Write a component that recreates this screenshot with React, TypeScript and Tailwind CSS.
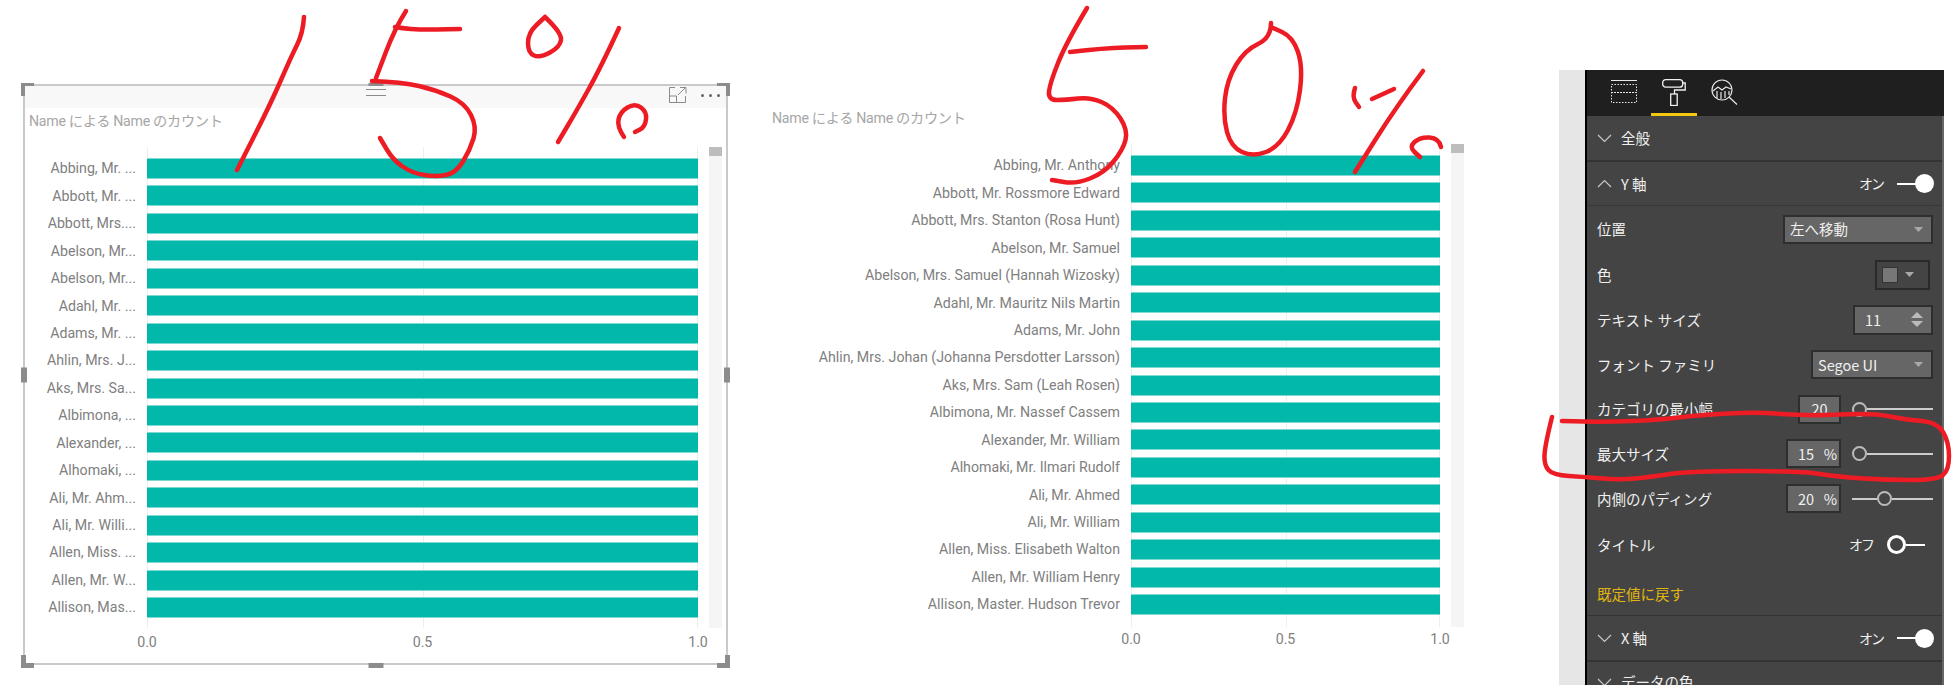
import type { ReactNode } from 'react';

const FULL_NAMES = [
  'Abbing, Mr. Anthony',
  'Abbott, Mr. Rossmore Edward',
  'Abbott, Mrs. Stanton (Rosa Hunt)',
  'Abelson, Mr. Samuel',
  'Abelson, Mrs. Samuel (Hannah Wizosky)',
  'Adahl, Mr. Mauritz Nils Martin',
  'Adams, Mr. John',
  'Ahlin, Mrs. Johan (Johanna Persdotter Larsson)',
  'Aks, Mrs. Sam (Leah Rosen)',
  'Albimona, Mr. Nassef Cassem',
  'Alexander, Mr. William',
  'Alhomaki, Mr. Ilmari Rudolf',
  'Ali, Mr. Ahmed',
  'Ali, Mr. William',
  'Allen, Miss. Elisabeth Walton',
  'Allen, Mr. William Henry',
  'Allison, Master. Hudson Trevor',
];

const SHORT_NAMES = [
  'Abbing, Mr. ...',
  'Abbott, Mr. ...',
  'Abbott, Mrs....',
  'Abelson, Mr...',
  'Abelson, Mr...',
  'Adahl, Mr. ...',
  'Adams, Mr. ...',
  'Ahlin, Mrs. J...',
  'Aks, Mrs. Sa...',
  'Albimona, ...',
  'Alexander, ...',
  'Alhomaki, ...',
  'Ali, Mr. Ahm...',
  'Ali, Mr. Willi...',
  'Allen, Miss. ...',
  'Allen, Mr. W...',
  'Allison, Mas...',
];

type Point = [number, number];

// smooth line through hand-traced points
function ink(points: Point[]) {
  let d = `M${points[0][0]} ${points[0][1]}`;
  for (let i = 1; i < points.length - 1; i++) {
    const [x, y] = points[i];
    const [nx, ny] = points[i + 1];
    d += ` Q${x} ${y} ${(x + nx) / 2} ${(y + ny) / 2}`;
  }
  const last = points[points.length - 1];
  return `${d} L${last[0]} ${last[1]}`;
}

const STROKES: Point[][] = [
  // 15%
  [[304, 17], [303, 33], [291, 57], [271, 103], [237, 170]],
  [[406, 11], [395, 28], [376, 78]],
  [[395, 27], [412, 30], [460, 29]],
  [[372, 81], [402, 82], [436, 90], [465, 103], [477, 127], [470, 150], [456, 173], [436, 177], [412, 173], [393, 160], [380, 138]],
  [[545, 17], [562, 33], [560, 47], [540, 58], [528, 53], [528, 33], [545, 17]],
  [[619, 28], [601, 67], [577, 110], [558, 142]],
  [[624, 137], [617, 127], [620, 112], [635, 103], [647, 112], [645, 127], [635, 132]],
  // 50%
  [[1087, 8], [1066, 43], [1050, 83], [1048, 100], [1066, 100], [1090, 97], [1113, 107], [1128, 130], [1123, 150], [1104, 173], [1076, 184], [1052, 180]],
  [[1070, 52], [1104, 48], [1146, 47]],
  [[1271, 23], [1271, 38], [1245, 50], [1227, 80], [1223, 117], [1231, 147], [1253, 157], [1279, 147], [1297, 113], [1303, 67], [1293, 37], [1271, 27]],
  [[1355, 88], [1352, 97], [1359, 107]],
  [[1372, 99], [1394, 89]],
  [[1423, 71], [1396, 107], [1355, 172]],
  [[1441, 147], [1439, 138], [1420, 137], [1409, 147], [1420, 157]],
  // circled setting
  [[1552, 417], [1545, 445], [1544, 465], [1553, 475], [1585, 477], [1620, 480], [1650, 477], [1690, 471], [1800, 471], [1840, 477], [1887, 480], [1937, 480], [1949, 470], [1949, 442], [1937, 422], [1907, 420], [1873, 413], [1807, 416], [1757, 412], [1700, 415], [1657, 420], [1607, 422], [1562, 421]],
];

function ChartBody({
  names,
  labelWidth,
  plotWidth,
  titleClass,
  axisClass,
  plotHeight,
}: {
  names: string[];
  labelWidth: string;
  plotWidth: string;
  titleClass: string;
  axisClass: string;
  plotHeight: string;
}) {
  return (
    <div>
      <p className={`h-[20px] whitespace-nowrap text-[14.2px] leading-[20px] tracking-[-0.3px] text-[#a6a6a6] ${titleClass}`}>
        Name による Name のカウント
      </p>
      <div className={`mt-[16px] flex ${plotHeight}`}>
        <div className={`flex shrink-0 flex-col pt-[7.8px] ${labelWidth}`}>
          {names.map((name, i) => (
            <div
              key={i}
              className="flex h-[27.44px] items-center justify-end whitespace-nowrap pt-px text-[14.2px] text-[#808080]"
            >
              {name}
            </div>
          ))}
        </div>
        <div className={`relative ml-[11px] flex shrink-0 flex-col pt-[7.8px] ${plotWidth}`}>
          <div className="absolute inset-y-0 left-0 w-px bg-[#eeeeee]" />
          <div className="absolute inset-y-0 left-1/2 w-px bg-[#eeeeee]" />
          <div className="absolute inset-y-0 right-0 w-px bg-[#eeeeee]" />
          {names.map((_, i) => (
            <div key={i} className="relative flex h-[27.44px] items-center">
              <div className="h-[21px] w-full border-y border-[#7fd9d1] bg-[#01b8aa]" />
            </div>
          ))}
        </div>
        <div className="ml-[11px] w-[13px] shrink-0 bg-[#f5f5f5]">
          <div className="h-[9px] bg-[#bdbdbd]" />
        </div>
      </div>
      <div className={`flex ${axisClass}`}>
        <div className={`shrink-0 ${labelWidth}`} />
        <div className={`ml-[11px] flex shrink-0 justify-between text-[14.2px] leading-[20px] text-[#808080] ${plotWidth}`}>
          <span className="flex w-0 justify-center">0.0</span>
          <span className="flex w-0 justify-center">0.5</span>
          <span className="flex w-0 justify-center">1.0</span>
        </div>
      </div>
    </div>
  );
}

function Caret() {
  return (
    <svg width="9" height="5" viewBox="0 0 9 5" className="shrink-0">
      <path d="M0 0h9L4.5 5z" fill="#a8a8a8" />
    </svg>
  );
}

function Chevron({ up }: { up?: boolean }) {
  return (
    <svg width="15" height="9" viewBox="0 0 15 9" fill="none" stroke="#c8c8c8" strokeWidth="1.2" className="shrink-0">
      <path d={up ? 'M1 8l6.5-6.5L14 8' : 'M1 1l6.5 6.5L14 1'} />
    </svg>
  );
}

function ToggleOn() {
  return (
    <div className="flex items-center">
      <div className="h-[2px] w-[19px] bg-white" />
      <div className="-ml-px size-[19px] rounded-full bg-white" />
    </div>
  );
}

function ToggleOff() {
  return (
    <div className="mr-[8px] flex items-center">
      <div className="size-[19px] rounded-full border-[3px] border-white" />
      <div className="h-[2px] w-[19px] bg-white" />
    </div>
  );
}

function SectionRow({
  title,
  up,
  className,
  right,
}: {
  title: string;
  up?: boolean;
  className: string;
  right?: ReactNode;
}) {
  return (
    <div className={`flex items-center pl-[10px] pr-[8px] ${className}`}>
      <Chevron up={up} />
      <span className="ml-[9px] text-[14.5px] text-[#f0f0f0]">{title}</span>
      {right}
    </div>
  );
}

function OnSwitch() {
  return (
    <div className="ml-auto flex items-center gap-[14px]">
      <span className="text-[14px] tracking-[-2px] text-[#f0f0f0]">オン</span>
      <ToggleOn />
    </div>
  );
}

function FormRow({ label, className, children }: { label: string; className: string; children: ReactNode }) {
  return (
    <div className={`flex items-center justify-between pl-[10px] pr-[9px] ${className}`}>
      <span className="whitespace-nowrap text-[14.5px] text-[#f0f0f0]">{label}</span>
      {children}
    </div>
  );
}

function Select({ value, className }: { value: string; className: string }) {
  return (
    <div className={`flex h-[29px] items-center justify-between border-2 border-[#2e2e2e] bg-[#666666] pl-[5px] pr-[8px] text-[14.5px] text-[#f0f0f0] ${className}`}>
      <span>{value}</span>
      <Caret />
    </div>
  );
}

function Slider({ value, percent, left }: { value: string; percent?: boolean; left: number }) {
  return (
    <div className="flex items-center">
      <div
        className={`flex h-[29px] items-center border-2 border-[#2e2e2e] bg-[#666666] text-[14.5px] text-[#f0f0f0] ${
          percent ? 'w-[55px] justify-between pl-[10px] pr-[2px]' : 'w-[43px] justify-center'
        }`}
      >
        <span>{value}</span>
        {percent && <span>%</span>}
      </div>
      <div className="ml-[11px] flex w-[81px] items-center">
        <div className="h-[2px] bg-[#cccccc]" style={{ width: left }} />
        <div className="size-[15px] shrink-0 rounded-full border-2 border-[#bbbbbb] bg-[#444444]" />
        <div className="h-[2px] flex-1 bg-[#cccccc]" />
      </div>
    </div>
  );
}

function FieldsIcon() {
  return (
    <svg width="26" height="24" viewBox="0 0 26 24" fill="none" stroke="#e8e8e8" strokeWidth="1">
      <path d="M0 .5h26" />
      <rect x=".5" y="4.5" width="25" height="8" strokeDasharray="1.5 1.5" />
      <rect x=".5" y="12.5" width="25" height="10" strokeDasharray="1.5 1.5" />
    </svg>
  );
}

function RollerIcon() {
  return (
    <svg width="24" height="27" viewBox="0 0 24 27" fill="none" stroke="#f2f2f2" strokeWidth="1.3">
      <rect x=".7" y=".7" width="20" height="7.5" rx="3" />
      <path d="M21 4h2.2v7H12.5v4" />
      <rect x="8.7" y="15" width="6.5" height="11.5" />
    </svg>
  );
}

function AnalyticsIcon() {
  return (
    <svg width="27" height="26" viewBox="0 0 27 26" fill="none" stroke="#e8e8e8" strokeWidth="1.2">
      <circle cx="11" cy="11" r="10" />
      <path d="M18 18l8 7.5M2 12l5-4 4 3 4-3 5 2M6 12v7M10 13v7M14 12v7M18 12v4" />
    </svg>
  );
}

function FocusIcon() {
  return (
    <svg width="18" height="16" viewBox="0 0 18 16" fill="none" stroke="#8a8a8a" strokeWidth="1" className="absolute left-[644px] top-[1px]">
      <path d="M6 .5H.5v15h16V9M.5 9h7v6.5M9 8l7-7M11 .5h6v6" />
    </svg>
  );
}

export default function App() {
  return (
    <div className="relative flex h-[685px] w-[1957px] items-start overflow-hidden bg-white font-['Roboto','Noto_Sans_CJK_JP',sans-serif]">
      {/* 15% chart, selected visual */}
      <div className="relative ml-[23px] mt-[84px] h-[581px] w-[705px] shrink-0 border-2 border-[#c9c9c9]">
        <div className="absolute -left-[4px] -top-[3px] size-[13px] border-l-[5px] border-t-[5px] border-[#8c8c8c]" />
        <div className="absolute -right-[4px] -top-[3px] size-[13px] border-r-[5px] border-t-[5px] border-[#8c8c8c]" />
        <div className="absolute -bottom-[5px] -left-[4px] size-[13px] border-b-[5px] border-l-[5px] border-[#8c8c8c]" />
        <div className="absolute -bottom-[5px] -right-[4px] size-[13px] border-b-[5px] border-r-[5px] border-[#8c8c8c]" />
        <div className="absolute -left-[4px] top-1/2 h-[15px] w-[6px] -translate-y-1/2 bg-[#8c8c8c]" />
        <div className="absolute -right-[4px] top-1/2 h-[15px] w-[6px] -translate-y-1/2 bg-[#8c8c8c]" />
        <div className="absolute -top-[3px] left-1/2 h-[5px] w-[15px] -translate-x-1/2 bg-[#8c8c8c]" />
        <div className="absolute -bottom-[5px] left-1/2 h-[5px] w-[15px] -translate-x-1/2 bg-[#8c8c8c]" />

        <div className="relative flex h-[22px] flex-col items-center bg-[#f8f8f8] pt-[3px]">
          <div className="h-[1px] w-[20px] bg-[#8a8a8a]" />
          <div className="mt-[5px] h-[1px] w-[20px] bg-[#8a8a8a]" />
          <FocusIcon />
          <div className="absolute left-[676px] top-[8px] flex gap-[5px]">
            <span className="size-[3px] rounded-full bg-[#666666]" />
            <span className="size-[3px] rounded-full bg-[#666666]" />
            <span className="size-[3px] rounded-full bg-[#666666]" />
          </div>
        </div>
        <div className="pt-[3px]">
          <ChartBody
            names={SHORT_NAMES}
            labelWidth="w-[111px]"
            plotWidth="w-[551px]"
            titleClass="pl-[4px]"
            axisClass="pt-[4px]"
            plotHeight="h-[481px]"
          />
        </div>
      </div>

      {/* 50% chart */}
      <div className="ml-[44px] mt-[108px] shrink-0">
        <ChartBody
          names={FULL_NAMES}
          labelWidth="w-[348px]"
          plotWidth="w-[309px]"
          titleClass=""
          axisClass="pt-[2px]"
          plotHeight="h-[483px]"
        />
      </div>

      {/* format pane */}
      <div className="ml-[95px] mt-[70px] flex h-[615px] shrink-0">
        <div className="w-[26px] bg-[#e6e6e6]" />
        <div className="flex w-[359px] flex-col border-l-2 border-black font-['Noto_Sans_CJK_JP','Open_Sans',sans-serif]">
          <div className="flex h-[46px] shrink-0 items-stretch bg-[#1f1f1f] pl-[24px]">
            <div className="mr-[14px] flex w-[26px] items-center pb-[2px]">
              <FieldsIcon />
            </div>
            <div className="flex w-[46px] items-center justify-center border-b-[3px] border-[#f2c811] pt-[2px]">
              <RollerIcon />
            </div>
            <div className="ml-[14px] flex w-[27px] items-center pb-[2px]">
              <AnalyticsIcon />
            </div>
          </div>
          <div className="flex-1 border-r-2 border-[#666666] bg-[#444444]">
            <SectionRow title="全般" className="h-[46px] border-b-2 border-[#333333]" />
            <SectionRow title="Y 軸" up className="h-[44px] border-b border-[#383838]" right={<OnSwitch />} />
            <FormRow label="位置" className="h-[46px]">
              <Select value="左へ移動" className="w-[150px]" />
            </FormRow>
            <FormRow label="色" className="h-[45px]">
              <div className="mr-[3px] flex h-[30px] w-[55px] items-center gap-[7px] border-2 border-[#2a2a2a] pl-[5px]">
                <div className="size-[16px] border border-[#333333] bg-[#777777]" />
                <Caret />
              </div>
            </FormRow>
            <FormRow label="テキスト サイズ" className="h-[45px]">
              <div className="flex h-[30px] w-[80px] items-center justify-between border-2 border-[#2e2e2e] bg-[#666666] pl-[10px] pr-[8px] text-[14.5px] text-[#f0f0f0]">
                <span>11</span>
                <div className="flex flex-col gap-[3px]">
                  <svg width="12" height="6" viewBox="0 0 12 6">
                    <path d="M0 6h12L6 0z" fill="#bbbbbb" />
                  </svg>
                  <svg width="12" height="6" viewBox="0 0 12 6">
                    <path d="M0 0h12L6 6z" fill="#bbbbbb" />
                  </svg>
                </div>
              </div>
            </FormRow>
            <FormRow label="フォント ファミリ" className="h-[45px]">
              <Select value="Segoe UI" className="w-[122px]" />
            </FormRow>
            <FormRow label="カテゴリの最小幅" className="h-[44px]">
              <Slider value="20" left={0} />
            </FormRow>
            <FormRow label="最大サイズ" className="h-[45px]">
              <Slider value="15" percent left={0} />
            </FormRow>
            <FormRow label="内側のパディング" className="h-[45px]">
              <Slider value="20" percent left={25} />
            </FormRow>
            <FormRow label="タイトル" className="h-[47px]">
              <div className="flex items-center gap-[14px]">
                <span className="text-[14px] tracking-[-2px] text-[#f0f0f0]">オフ</span>
                <ToggleOff />
              </div>
            </FormRow>
            <div className="h-[47px] pl-[10px] pt-[15px] text-[14.5px] text-[#e0b511]">既定値に戻す</div>
            <SectionRow title="X 軸" className="h-[47px] border-y border-b-2 border-[#333333]" right={<OnSwitch />} />
            <SectionRow title="データの色" className="h-[40px]" />
          </div>
        </div>
      </div>

      {/* handwritten notes drawn over the screenshot */}
      <svg
        className="pointer-events-none absolute inset-0"
        width="1957"
        height="685"
        fill="none"
        stroke="#ed1c24"
        strokeWidth="4.5"
        strokeLinecap="round"
        strokeLinejoin="round"
      >
        {STROKES.map((points, i) => (
          <path key={i} d={ink(points)} />
        ))}
      </svg>
    </div>
  );
}
